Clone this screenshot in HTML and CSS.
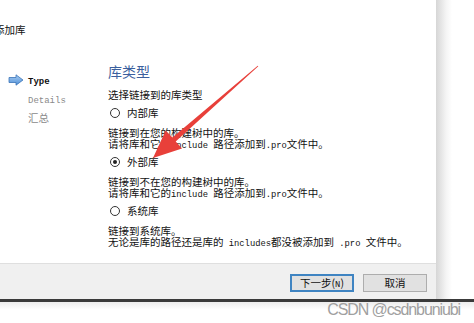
FILE: index.html
```html
<!DOCTYPE html>
<html lang="zh-CN">
  <head>
    <meta charset="UTF-8" />
    <title>添加库</title>
    <link rel="stylesheet" href="styles.css">
  </head>
  <body>
    <div class="window">
      <div class="dialog">
        <div class="title">添加库</div>

        <div class="main">
          <!-- 左侧步骤 -->
          <ul class="steps">
            <li class="step current">
              <svg class="step-arrow" width="16" height="12" viewBox="0 0 16 12">
                <defs>
                  <linearGradient id="ag" x1="0" y1="0" x2="0" y2="1">
                    <stop offset="0" stop-color="#a9cdf3" />
                    <stop offset="1" stop-color="#4f8fd6" />
                  </linearGradient>
                </defs>
                <path d="M1 3.5 H8 V0.8 L15 6 L8 11.2 V8.5 H1 Z" fill="url(#ag)" stroke="#3a73b8" stroke-width="0.8" />
              </svg>
              <span class="mono">Type</span>
            </li>
            <li class="step"><span class="mono">Details</span></li>
            <li class="step">汇总</li>
          </ul>

          <!-- 库类型 -->
          <div class="content">
            <h2>库类型</h2>
            <p class="prompt">选择链接到的库类型</p>

            <label class="radio"><span class="dot"></span>内部库</label>
            <div class="desc">
              <span class="line">链接到在您的构建树中的库。</span>
              <span class="line">请将库和它的<span class="mono">include </span>路径添加到<span class="mono">.pro</span>文件中。</span>
            </div>

            <label class="radio checked"><span class="dot"></span>外部库</label>
            <div class="desc">
              <span class="line">链接到不在您的构建树中的库。</span>
              <span class="line">请将库和它的<span class="mono">include </span>路径添加到<span class="mono">.pro</span>文件中。</span>
            </div>

            <label class="radio"><span class="dot"></span>系统库</label>
            <div class="desc">
              <span class="line">链接到系统库。</span>
              <span class="line">无论是库的路径还是库的<span class="mono"> includes</span>都没被添加到<span class="mono"> .pro </span>文件中。</span>
            </div>
          </div>
        </div>

        <div class="footer">
          <button class="btn primary">下一步(<span class="mono">N</span>)</button>
          <button class="btn">取消</button>
        </div>
      </div>
      <div class="edge"></div>
    </div>
    <div class="rule"></div>
    <div class="watermark">CSDN @csdnbuniubi</div>

    <!-- 红色标注箭头 -->
    <svg class="mark" width="474" height="323" viewBox="0 0 474 323">
      <polygon fill="#e8403a"
        points="258.3,66.3 257.7,65.7 172.4,137.6 165.7,130.5 153,158 182,148.5 175.7,141.4" />
    </svg>
  </body>
</html>
```

FILE: styles.css
```css
/* 全局 */
body {
  margin: 0;
  width: 474px;
  height: 323px;
  overflow: hidden;
  position: relative;
  background: #ffffff;
  font-family: "Noto Sans CJK SC", "Liberation Sans", sans-serif;
  font-size: 10.5px;
  color: #111111;
}

.mono {
  font-family: "Liberation Mono", "Noto Sans CJK SC", monospace;
  font-size: 8.8px;
  line-height: 1;
}

/* 窗口 */
.window {
  display: flex;
  height: 299px;
}

.dialog {
  width: 436px;
  display: flex;
  flex-direction: column;
  background: #ffffff;
}

.edge {
  flex: 1;
  background: linear-gradient(to right, #d6d6d6, #f4f4f4 10px, #ffffff 16px);
}

.title {
  padding-top: 24px;
  height: 16px;
  line-height: 11px;
  margin-left: -6px;
}

.main {
  flex: 1;
  display: flex;
}

/* 左侧步骤 */
.steps {
  list-style: none;
  margin: 0;
  padding: 30px 0 0 0;
  width: 108px;
}

.step {
  height: 19px;
  line-height: 19px;
  padding-left: 28px;
  position: relative;
  color: #8a8a8a;
}

.step .mono {
  font-size: 9px;
}

.step.current {
  color: #111111;
  font-weight: bold;
}

.step-arrow {
  position: absolute;
  left: 8px;
  top: 4px;
}

/* 内容 */
.content {
  padding-top: 23px;
}

.content h2 {
  margin: 0;
  font-size: 14px;
  font-weight: normal;
  line-height: 16px;
  color: #3b5f9e;
}

.prompt {
  margin: 9.5px 0 0 0;
  line-height: 11px;
}

.radio {
  display: flex;
  align-items: center;
  gap: 7px;
  height: 12px;
  margin-top: 7px;
  margin-left: 2px;
}

.radio .dot {
  width: 8px;
  height: 8px;
  border: 1px solid #333333;
  border-radius: 50%;
  display: flex;
  align-items: center;
  justify-content: center;
}

.radio.checked .dot::after {
  content: "";
  width: 4px;
  height: 4px;
  border-radius: 50%;
  background: #222222;
}

.desc {
  margin-top: 8px;
  white-space: nowrap;
}

.desc .line {
  display: flex;
  align-items: baseline;
  height: 11px;
  line-height: 11px;
  white-space: pre;
}

/* 底部按钮 */
.footer {
  height: 36px;
  background: #f0f0f0;
  border-top: 1px solid #dfdfdf;
  display: flex;
  justify-content: flex-end;
  align-items: flex-start;
  gap: 9px;
  padding: 10px 9px 0 0;
  box-sizing: border-box;
}

.btn {
  width: 64px;
  height: 18px;
  padding: 0;
  font-family: inherit;
  font-size: 10.5px;
  line-height: 14px;
  color: #111111;
  background: #e1e1e1;
  border: 1px solid #adadad;
}

.btn.primary {
  border: 2px solid #3f84c2;
}

.btn .mono {
  font-size: 8.8px;
}

/* 截图底部 */
.rule {
  height: 3px;
  background: #3a3a3a;
}

.watermark {
  text-align: right;
  padding-right: 14px;
  font-family: "Liberation Sans", sans-serif;
  font-size: 16px;
  letter-spacing: -1.1px;
  line-height: 16px;
  color: #a0a0a0;
  background: linear-gradient(#ececec, #ffffff 8px);
}

.mark {
  position: absolute;
  left: 0;
  top: 0;
  pointer-events: none;
}
```
